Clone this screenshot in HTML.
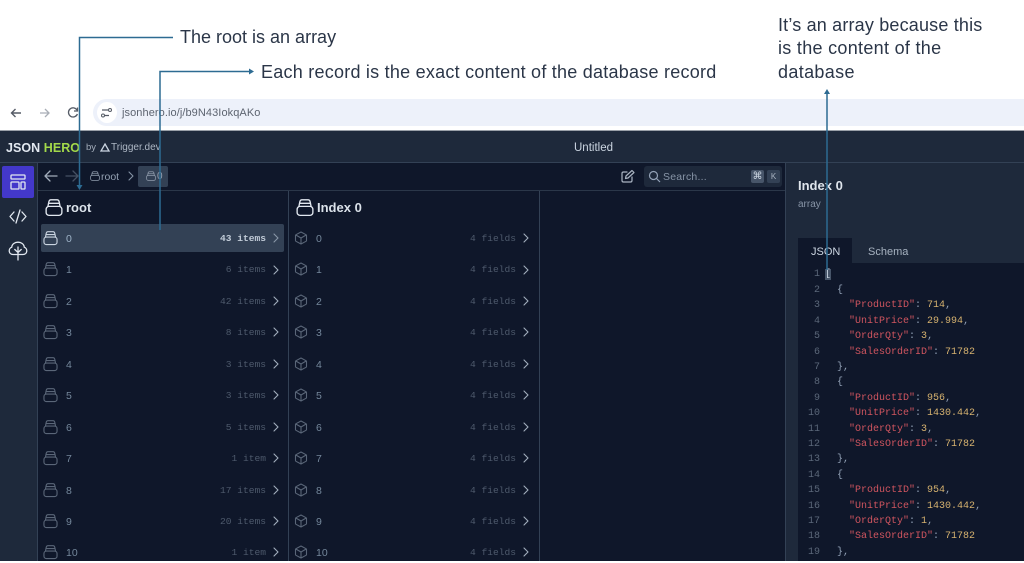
<!DOCTYPE html>
<html><head><meta charset="utf-8"><title>JSON Hero</title>
<style>
html,body{margin:0;padding:0;background:#fff}
body{width:1024px;height:561px;overflow:hidden;position:relative;font-family:"Liberation Sans",sans-serif;filter:blur(.35px)}
.a{position:absolute;white-space:nowrap}
.note{font-size:18px;color:#2b3648;line-height:24px}
.r{position:absolute;height:20px;line-height:20px;font-size:10px;margin-top:1px}
.n{position:absolute;left:0;top:0;color:#74879b;font-family:"Liberation Sans",sans-serif;font-size:10.5px}
.c{position:absolute;right:0;top:0;font-family:"Liberation Mono",monospace;font-size:9.6px;color:#4e5a6c;text-align:right;white-space:pre}
svg{position:absolute;overflow:visible}
#code{position:absolute;left:798px;top:264px;width:226px;height:297px;overflow:hidden}
.l{position:absolute;left:0;height:15px;line-height:15px;font-family:"Liberation Mono",monospace;font-size:10px;color:#94a3b8;white-space:pre;width:226px}
.l i{font-style:normal;display:inline-block;width:22px;text-align:right;color:#5b6779;margin-right:5px}
.l b{font-weight:normal;color:#d0555f}.l u{text-decoration:none;color:#d6b26f}
</style></head>
<body>
<svg width="0" height="0" style="position:absolute"><defs>
<g id="db" fill="none" stroke-width="1.2" stroke-linecap="round" stroke-linejoin="round">
<path d="M2.600 6.500L3.400 2.500Q3.800 .7 5.300 .7H10.700Q12.200 .7 12.600 2.500L13.400 6.500"/><path d="M3.200 3.800H12.800"/><rect x="1" y="6.500" width="14" height="8" rx="2.600"/></g>
<g id="cube" fill="none" stroke-width="1.1" stroke-linejoin="round"><path d="M7 1L12 3.700Q12.500 4 12.500 4.500V9.500Q12.500 10 12 10.300L7 13L2 10.300Q1.500 10 1.500 9.500V4.500Q1.500 4 2 3.700Z"/><path d="M1.800 4L7 7L12.200 4M7 7V13"/></g>
<path id="ch" d="M1 1L5 5L1 9" fill="none" stroke-width="1.1" stroke-linecap="round" stroke-linejoin="round"/>
</defs></svg>

<!-- browser bar -->
<div class="a" style="left:93px;top:99px;width:931px;height:27px;background:#edf1fa;border-radius:14px 0 0 14px"></div>
<div class="a" style="left:97px;top:102px;width:20px;height:21px;background:#fff;border-radius:50%"></div>
<div class="a" style="left:122px;top:105px;font-size:11px;line-height:16px;color:#5d6470;letter-spacing:.08px">jsonhero.io/j/b9N43IokqAKo</div>
<svg style="left:0;top:0" width="1024" height="131">
<path d="M21 113H12M15.500 109L11.500 113L15.500 117" fill="none" stroke="#555b66" stroke-width="1.400"/>
<path d="M49 113H40M45 109L49 113L45 117" fill="none" stroke="#a9aeb6" stroke-width="1.300"/>
<path d="M77 110A4.600 4.600 0 1 0 77.400 114M77.500 107.500V111H74" fill="none" stroke="#555b66" stroke-width="1.300"/>
<path d="M102 110H109M102 115.500H109" stroke="#555b66" stroke-width="1.300"/><circle cx="110" cy="110" r="1.500" fill="#fff" stroke="#555b66"/><circle cx="103" cy="115.500" r="1.500" fill="#fff" stroke="#555b66"/>
</svg>

<!-- app -->
<div class="a" style="left:0;top:130px;width:1024px;height:1px;background:#9aa0a8"></div>
<div class="a" style="left:0;top:131px;width:1024px;height:430px;background:#1e293b"></div>
<div class="a" style="left:0;top:162px;width:1024px;height:1px;background:#334155"></div>
<div class="a" style="left:38px;top:163px;width:747px;height:398px;background:#0f172a"></div>
<div class="a" style="left:798px;top:263px;width:226px;height:298px;background:#0f172a"></div>
<div class="a" style="left:37px;top:163px;width:1px;height:398px;background:#334155"></div>
<div class="a" style="left:38px;top:190px;width:747px;height:1px;background:#2b3749"></div>
<div class="a" style="left:288px;top:191px;width:1px;height:370px;background:#334155"></div>
<div class="a" style="left:539px;top:191px;width:1px;height:370px;background:#334155"></div>
<div class="a" style="left:785px;top:163px;width:1px;height:398px;background:#334155"></div>

<!-- header -->
<div class="a" style="left:6px;top:140px;font-size:12.500px;line-height:16px;font-weight:bold;color:#e2e8f0;letter-spacing:.05px">JSON <span style="color:#a3d94a">HERO</span></div>
<div class="a" style="left:86px;top:141px;font-size:9.500px;line-height:14px;color:#a3adba">by</div>
<svg style="left:100px;top:143px" width="10" height="9"><path d="M5 1L9 8H1Z" fill="none" stroke="#cbd5e1" stroke-width="1.300"/></svg>
<div class="a" style="left:111px;top:141px;font-size:10px;line-height:14px;color:#aeb8c5">Trigger.dev</div>
<div class="a" style="left:574px;top:140px;font-size:11.500px;line-height:16px;color:#cbd5e1">Untitled</div>

<!-- sidebar -->
<div class="a" style="left:2px;top:166px;width:32px;height:32px;background:#4338ca;border-radius:2px"></div>
<svg style="left:0;top:160px" width="38" height="110" fill="none" stroke="#e2e8f0" stroke-width="1.300" stroke-linecap="round" stroke-linejoin="round">
<rect x="11" y="15" width="14" height="4" rx=".8"/><rect x="11" y="22" width="8" height="7" rx=".8"/><rect x="21" y="22" width="4" height="7" rx=".8"/>
<path d="M14 52L10 56.500L14 61M22 52L26 56.500L22 61M20 50L16 63"/>
<path d="M18 100V87M18 92.500L14.800 89.500M18 92.500L21.200 89.500M13 94.500H23C27.500 94.500 28 88.500 24.300 87.300C23.800 80.500 12.200 80.500 11.700 87.300C8 88.500 8.500 94.500 13 94.500Z"/>
</svg>

<!-- breadcrumb -->
<svg style="left:0;top:162px" width="180" height="28" fill="none" stroke-linecap="round" stroke-linejoin="round">
<path d="M57 14H45M50 9L45 14L50 19" stroke="#a2adbb" stroke-width="1.300"/>
<path d="M66 14H78M73 9L78 14L73 19" stroke="#465163" stroke-width="1.300"/>
<path d="M129 10L133 14L129 18" stroke="#8593a5" stroke-width="1.100"/>
</svg>
<div class="a" style="left:138px;top:166px;width:30px;height:21px;background:#334155;border-radius:2px"></div>
<svg style="left:90px;top:171px" width="10" height="10" viewBox="0 0 16 15" stroke="#8f9bab"><use href="#db"/></svg>
<svg style="left:146px;top:171px" width="10" height="10" viewBox="0 0 16 15" stroke="#8f9bab"><use href="#db"/></svg>
<div class="a" style="left:101px;top:170px;font-size:10.500px;line-height:14px;color:#94a1b2">root</div>
<div class="a" style="left:157px;top:170px;font-size:10px;line-height:14px;color:#94a1b2">0</div>

<!-- search -->
<svg style="left:620px;top:169px" width="15" height="15" fill="none" stroke="#aab4c2" stroke-width="1.200" stroke-linecap="round" stroke-linejoin="round"><path d="M7 3H3.500Q2 3 2 4.500V11.500Q2 13 3.500 13H10.500Q12 13 12 11.500V8M5.500 9.500L6 7L12 1.500L14 3.500L8 9Z"/></svg>
<div class="a" style="left:644px;top:166px;width:138px;height:21px;background:#1e293b;border-radius:3px"></div>
<svg style="left:648px;top:170px" width="13" height="13" fill="none" stroke="#94a3b8" stroke-width="1.200"><circle cx="5.500" cy="5.500" r="4"/><path d="M8.500 8.500L12 12"/></svg>
<div class="a" style="left:663px;top:170px;font-size:10.500px;line-height:14px;color:#8794a6;letter-spacing:.2px">Search...</div>
<div class="a" style="left:751px;top:170px;width:13px;height:13px;background:#475569;border-radius:2px;font-size:10px;line-height:13px;text-align:center;color:#cbd5e1">&#8984;</div>
<div class="a" style="left:767px;top:170px;width:13px;height:13px;background:#334155;border-radius:2px;font-size:8px;line-height:13px;text-align:center;color:#aab4c2">K</div>

<!-- column headings -->
<svg style="left:45px;top:199px" width="18" height="17" viewBox="0 0 16 15" stroke="#e2e8f0"><use href="#db"/></svg>
<div class="a" style="left:66px;top:200px;font-size:13px;line-height:16px;font-weight:bold;color:#dbe2ea">root</div>
<svg style="left:296px;top:199px" width="18" height="17" viewBox="0 0 16 15" stroke="#e2e8f0"><use href="#db"/></svg>
<div class="a" style="left:317px;top:200px;font-size:13px;line-height:16px;font-weight:bold;color:#dbe2ea">Index 0</div>

<!-- selection -->
<div class="a" style="left:41px;top:224px;width:243px;height:28px;background:#334155;border-radius:2px"></div>

<!-- column 1 rows -->
<svg style="left:43px;top:231px" width="15" height="14" viewBox="0 0 16 15" stroke="#cbd5e1"><use href="#db"/></svg>
<div class="r" style="left:66px;top:228px;width:200px"><span class="n" style="color:#9fb4c8">0</span><span class="c" style="color:#c2ccd8;font-weight:bold">43 items</span></div>
<svg style="left:273px;top:233px" width="6" height="10" stroke="#8a97a8"><use href="#ch"/></svg>

<svg style="left:43px;top:262px" width="15" height="14" viewBox="0 0 16 15" stroke="#5a6678"><use href="#db"/></svg>
<div class="r" style="left:66px;top:259px;width:200px"><span class="n">1</span><span class="c">6 items</span></div>
<svg style="left:273px;top:265px" width="6" height="10" stroke="#a3afbd"><use href="#ch"/></svg>

<svg style="left:43px;top:294px" width="15" height="14" viewBox="0 0 16 15" stroke="#5a6678"><use href="#db"/></svg>
<div class="r" style="left:66px;top:291px;width:200px"><span class="n">2</span><span class="c">42 items</span></div>
<svg style="left:273px;top:296px" width="6" height="10" stroke="#a3afbd"><use href="#ch"/></svg>

<svg style="left:43px;top:325px" width="15" height="14" viewBox="0 0 16 15" stroke="#5a6678"><use href="#db"/></svg>
<div class="r" style="left:66px;top:322px;width:200px"><span class="n">3</span><span class="c">8 items</span></div>
<svg style="left:273px;top:327px" width="6" height="10" stroke="#a3afbd"><use href="#ch"/></svg>

<svg style="left:43px;top:357px" width="15" height="14" viewBox="0 0 16 15" stroke="#5a6678"><use href="#db"/></svg>
<div class="r" style="left:66px;top:354px;width:200px"><span class="n">4</span><span class="c">3 items</span></div>
<svg style="left:273px;top:359px" width="6" height="10" stroke="#a3afbd"><use href="#ch"/></svg>

<svg style="left:43px;top:388px" width="15" height="14" viewBox="0 0 16 15" stroke="#5a6678"><use href="#db"/></svg>
<div class="r" style="left:66px;top:385px;width:200px"><span class="n">5</span><span class="c">3 items</span></div>
<svg style="left:273px;top:390px" width="6" height="10" stroke="#a3afbd"><use href="#ch"/></svg>

<svg style="left:43px;top:420px" width="15" height="14" viewBox="0 0 16 15" stroke="#5a6678"><use href="#db"/></svg>
<div class="r" style="left:66px;top:417px;width:200px"><span class="n">6</span><span class="c">5 items</span></div>
<svg style="left:273px;top:422px" width="6" height="10" stroke="#a3afbd"><use href="#ch"/></svg>

<svg style="left:43px;top:451px" width="15" height="14" viewBox="0 0 16 15" stroke="#5a6678"><use href="#db"/></svg>
<div class="r" style="left:66px;top:448px;width:200px"><span class="n">7</span><span class="c">1 item</span></div>
<svg style="left:273px;top:453px" width="6" height="10" stroke="#a3afbd"><use href="#ch"/></svg>

<svg style="left:43px;top:483px" width="15" height="14" viewBox="0 0 16 15" stroke="#5a6678"><use href="#db"/></svg>
<div class="r" style="left:66px;top:480px;width:200px"><span class="n">8</span><span class="c">17 items</span></div>
<svg style="left:273px;top:485px" width="6" height="10" stroke="#a3afbd"><use href="#ch"/></svg>

<svg style="left:43px;top:514px" width="15" height="14" viewBox="0 0 16 15" stroke="#5a6678"><use href="#db"/></svg>
<div class="r" style="left:66px;top:511px;width:200px"><span class="n">9</span><span class="c">20 items</span></div>
<svg style="left:273px;top:516px" width="6" height="10" stroke="#a3afbd"><use href="#ch"/></svg>

<svg style="left:43px;top:545px" width="15" height="14" viewBox="0 0 16 15" stroke="#5a6678"><use href="#db"/></svg>
<div class="r" style="left:66px;top:542px;width:200px"><span class="n">10</span><span class="c">1 item</span></div>
<svg style="left:273px;top:547px" width="6" height="10" stroke="#a3afbd"><use href="#ch"/></svg>

<!-- column 2 rows -->
<svg style="left:294px;top:231px" width="14" height="14" stroke="#5a6678"><use href="#cube"/></svg>
<div class="r" style="left:316px;top:228px;width:200px"><span class="n">0</span><span class="c">4 fields</span></div>
<svg style="left:523px;top:233px" width="6" height="10" stroke="#a3afbd"><use href="#ch"/></svg>

<svg style="left:294px;top:262px" width="14" height="14" stroke="#5a6678"><use href="#cube"/></svg>
<div class="r" style="left:316px;top:259px;width:200px"><span class="n">1</span><span class="c">4 fields</span></div>
<svg style="left:523px;top:265px" width="6" height="10" stroke="#a3afbd"><use href="#ch"/></svg>

<svg style="left:294px;top:294px" width="14" height="14" stroke="#5a6678"><use href="#cube"/></svg>
<div class="r" style="left:316px;top:291px;width:200px"><span class="n">2</span><span class="c">4 fields</span></div>
<svg style="left:523px;top:296px" width="6" height="10" stroke="#a3afbd"><use href="#ch"/></svg>

<svg style="left:294px;top:325px" width="14" height="14" stroke="#5a6678"><use href="#cube"/></svg>
<div class="r" style="left:316px;top:322px;width:200px"><span class="n">3</span><span class="c">4 fields</span></div>
<svg style="left:523px;top:327px" width="6" height="10" stroke="#a3afbd"><use href="#ch"/></svg>

<svg style="left:294px;top:357px" width="14" height="14" stroke="#5a6678"><use href="#cube"/></svg>
<div class="r" style="left:316px;top:354px;width:200px"><span class="n">4</span><span class="c">4 fields</span></div>
<svg style="left:523px;top:359px" width="6" height="10" stroke="#a3afbd"><use href="#ch"/></svg>

<svg style="left:294px;top:388px" width="14" height="14" stroke="#5a6678"><use href="#cube"/></svg>
<div class="r" style="left:316px;top:385px;width:200px"><span class="n">5</span><span class="c">4 fields</span></div>
<svg style="left:523px;top:390px" width="6" height="10" stroke="#a3afbd"><use href="#ch"/></svg>

<svg style="left:294px;top:420px" width="14" height="14" stroke="#5a6678"><use href="#cube"/></svg>
<div class="r" style="left:316px;top:417px;width:200px"><span class="n">6</span><span class="c">4 fields</span></div>
<svg style="left:523px;top:422px" width="6" height="10" stroke="#a3afbd"><use href="#ch"/></svg>

<svg style="left:294px;top:451px" width="14" height="14" stroke="#5a6678"><use href="#cube"/></svg>
<div class="r" style="left:316px;top:448px;width:200px"><span class="n">7</span><span class="c">4 fields</span></div>
<svg style="left:523px;top:453px" width="6" height="10" stroke="#a3afbd"><use href="#ch"/></svg>

<svg style="left:294px;top:483px" width="14" height="14" stroke="#5a6678"><use href="#cube"/></svg>
<div class="r" style="left:316px;top:480px;width:200px"><span class="n">8</span><span class="c">4 fields</span></div>
<svg style="left:523px;top:485px" width="6" height="10" stroke="#a3afbd"><use href="#ch"/></svg>

<svg style="left:294px;top:514px" width="14" height="14" stroke="#5a6678"><use href="#cube"/></svg>
<div class="r" style="left:316px;top:511px;width:200px"><span class="n">9</span><span class="c">4 fields</span></div>
<svg style="left:523px;top:516px" width="6" height="10" stroke="#a3afbd"><use href="#ch"/></svg>

<svg style="left:294px;top:545px" width="14" height="14" stroke="#5a6678"><use href="#cube"/></svg>
<div class="r" style="left:316px;top:542px;width:200px"><span class="n">10</span><span class="c">4 fields</span></div>
<svg style="left:523px;top:547px" width="6" height="10" stroke="#a3afbd"><use href="#ch"/></svg>

<!-- right panel -->
<div class="a" style="left:798px;top:178px;font-size:13px;line-height:16px;font-weight:bold;color:#dfe5ec">Index 0</div>
<div class="a" style="left:798px;top:198px;font-size:10px;line-height:14px;color:#8794a6">array</div>
<div class="a" style="left:798px;top:238px;width:54px;height:25px;background:#0f172a"></div>
<div class="a" style="left:811px;top:245px;font-size:11px;line-height:15px;color:#cbd5e1">JSON</div>
<div class="a" style="left:868px;top:245px;font-size:11px;line-height:15px;color:#a7b2c0">Schema</div>

<div id="code">
<div class="l" style="top:3px"><i>1</i><span style="background:#475569;color:#cbd5e1">[</span></div>
<div class="l" style="top:19px"><i>2</i>  {</div>
<div class="l" style="top:34px"><i>3</i>    <b>"ProductID"</b>: <u>714</u>,</div>
<div class="l" style="top:50px"><i>4</i>    <b>"UnitPrice"</b>: <u>29.994</u>,</div>
<div class="l" style="top:65px"><i>5</i>    <b>"OrderQty"</b>: <u>3</u>,</div>
<div class="l" style="top:81px"><i>6</i>    <b>"SalesOrderID"</b>: <u>71782</u></div>
<div class="l" style="top:96px"><i>7</i>  },</div>
<div class="l" style="top:111px"><i>8</i>  {</div>
<div class="l" style="top:127px"><i>9</i>    <b>"ProductID"</b>: <u>956</u>,</div>
<div class="l" style="top:142px"><i>10</i>    <b>"UnitPrice"</b>: <u>1430.442</u>,</div>
<div class="l" style="top:158px"><i>11</i>    <b>"OrderQty"</b>: <u>3</u>,</div>
<div class="l" style="top:173px"><i>12</i>    <b>"SalesOrderID"</b>: <u>71782</u></div>
<div class="l" style="top:188px"><i>13</i>  },</div>
<div class="l" style="top:204px"><i>14</i>  {</div>
<div class="l" style="top:219px"><i>15</i>    <b>"ProductID"</b>: <u>954</u>,</div>
<div class="l" style="top:235px"><i>16</i>    <b>"UnitPrice"</b>: <u>1430.442</u>,</div>
<div class="l" style="top:250px"><i>17</i>    <b>"OrderQty"</b>: <u>1</u>,</div>
<div class="l" style="top:265px"><i>18</i>    <b>"SalesOrderID"</b>: <u>71782</u></div>
<div class="l" style="top:281px"><i>19</i>  },</div>
</div>

<!-- annotations -->
<div class="a note" style="left:180px;top:25px">The root is an array</div>
<div class="a note" style="left:261px;top:60px;letter-spacing:.24px">Each record is the exact content of the database record</div>
<div class="a note" style="left:778px;top:13px;letter-spacing:.18px">It’s an array because this</div>
<div class="a note" style="left:778px;top:36px;letter-spacing:.3px">is the content of the</div>
<div class="a note" style="left:778px;top:60px;letter-spacing:.35px">database</div>
<svg style="left:0;top:0" width="1024" height="561" fill="none" stroke="#2d6b92">
<path d="M173 37.500H79.500V186" stroke-width="1.500"/><path d="M76.500 185H82.500L79.500 190Z" fill="#2d6b92" stroke="none"/>
<path d="M160 230V71.500H250" stroke-width="1.500"/><path d="M249 68.500L254 71.500L249 74.500Z" fill="#2d6b92" stroke="none"/>
<path d="M827 93V270" stroke-width="1.500"/><path d="M824 94L827 89L830 94Z" fill="#2d6b92" stroke="none"/>
</svg>
</body></html>
